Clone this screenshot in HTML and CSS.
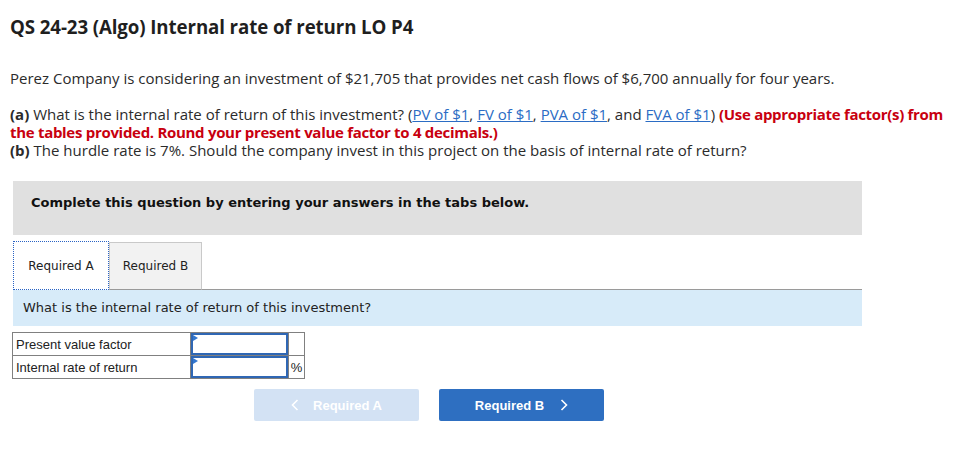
FILE: index.html
```html
<!DOCTYPE html>
<html>
<head>
<meta charset="utf-8">
<link rel="stylesheet" href="styles.css">
</head>
<body>
<h1 class="title">QS 24-23 (Algo) Internal rate of return LO P4</h1>
<p class="intro">Perez Company is considering an investment of $21,705 that provides net cash flows of $6,700 annually for four years.</p>
<p class="parts"><b>(a)</b> What is the internal rate of return of this investment? (<a href="#">PV of $1</a>, <a href="#">FV of $1</a>, <a href="#">PVA of $1</a>, and <a href="#">FVA of $1</a>) <span class="red">(Use appropriate factor(s) from the tables provided. Round your present value factor to 4 decimals.)</span><br><b>(b)</b> The hurdle rate is 7%. Should the company invest in this project on the basis of internal rate of return?</p>

<div class="question">
  <div class="banner">Complete this question by entering your answers in the tabs below.</div>
  <div class="tabs">
    <div class="tab active">Required A</div>
    <div class="tab">Required B</div>
    <div class="tab-rest"></div>
  </div>
  <div class="prompt">What is the internal rate of return of this investment?</div>
  <table class="answers">
    <tr>
      <td class="label">Present value factor</td>
      <td class="input"><div class="box"><span class="flag"></span></div></td>
      <td class="unit"></td>
    </tr>
    <tr>
      <td class="label">Internal rate of return</td>
      <td class="input"><div class="box"><span class="flag"></span></div></td>
      <td class="unit">%</td>
    </tr>
  </table>
  <div class="nav">
    <button class="btn prev"><svg class="chev left" width="8" height="12" viewBox="0 0 8 12"><path d="M6.5 1 L1.5 6 L6.5 11" fill="none" stroke="#fff" stroke-width="1.6"/></svg>Required A</button>
    <button class="btn next">Required B<svg class="chev right" width="8" height="12" viewBox="0 0 8 12"><path d="M1.5 1 L6.5 6 L1.5 11" fill="none" stroke="#fff" stroke-width="1.6"/></svg></button>
  </div>
</div>
</body>
</html>
```

FILE: styles.css
```css
html, body {
  margin: 0;
  padding: 0;
  background: #fff;
}
body {
  padding: 0 10px;
  font-family: "Open Sans", "Liberation Sans", sans-serif;
  color: #2b2b2b;
}
.title {
  margin: 0;
  padding-top: 15px;
  font-size: 18.7px;
  line-height: 24px;
  font-weight: 700;
  color: #1f1f1f;
  letter-spacing: -0.1px;
}
.intro {
  margin: 30px 0 0 0;
  font-size: 15px;
  line-height: 18px;
}
.parts {
  margin: 18px 0 0 0;
  max-width: 950px;
  font-size: 15px;
  line-height: 18px;
}
.parts b { font-weight: 700; color: #2b2b2b; }
.parts a {
  color: #2b6cc4;
  text-decoration: underline;
}
.red {
  color: #c8000f;
  font-weight: 700;
  letter-spacing: -0.3px;
}
.question {
  margin: 22px 0 0 3px;
  width: 849px;
  font-family: "DejaVu Sans", Verdana, sans-serif;
}
.banner {
  background: #e0e0e0;
  height: 54px;
  box-sizing: border-box;
  padding: 14px 18px 0 18px;
  font-size: 13px;
  font-weight: 700;
  color: #111;
  line-height: 16px;
}
.tabs {
  display: flex;
  margin-top: 6px;
  height: 49px;
}
.tab {
  box-sizing: border-box;
  width: 93px;
  height: 48px;
  margin-top: 1px;
  border: 1px solid #c9c9c9;
  background: #f2f2f2;
  font-size: 12px;
  color: #222;
  display: flex;
  align-items: center;
  justify-content: center;
  border-bottom: 1px solid #9a9a9a;
}
.tab.active {
  width: 96px;
  height: 49px;
  margin-top: 0;
  background: #fff;
  border: 1px dotted #2a63c4;
}
.tab-rest {
  flex: 1;
  border-bottom: 1px solid #9a9a9a;
}
.prompt {
  background: #d7ebf9;
  height: 36px;
  box-sizing: border-box;
  padding: 10px 10px 0 10px;
  font-size: 13px;
  color: #222;
  line-height: 16px;
}
.answers {
  margin: 6px 0 0 -1px;
  border-collapse: collapse;
  font-family: "Liberation Sans", Arial, sans-serif;
  font-size: 13px;
  color: #222;
}
.answers td {
  border: 1px solid #808080;
  height: 22px;
  padding: 0;
}
.answers .label {
  width: 174px;
  padding-left: 3px;
}
.answers .input {
  width: 97px;
  padding: 0;
}
.answers .unit {
  width: 15px;
  text-align: center;
}
.box {
  position: relative;
  box-sizing: border-box;
  height: 22px;
  border: 2px solid #2f67b4;
  background: #fff;
}
.flag {
  position: absolute;
  left: 0;
  top: 0;
  width: 0;
  height: 0;
  border-top: 3px solid transparent;
  border-bottom: 3px solid transparent;
  border-left: 5px solid #3277d0;
}
.nav {
  display: flex;
  gap: 20px;
  margin: 10px 0 0 241px;
}
.btn {
  width: 165px;
  height: 32px;
  border: none;
  border-radius: 2px;
  font-family: "Liberation Sans", Arial, sans-serif;
  font-size: 13px;
  font-weight: 700;
  color: #fff;
  display: flex;
  align-items: center;
  justify-content: center;
  padding: 0;
}
.prev { background: #d3e2f4; }
.next { background: #2e6fc1; }
.chev { display: block; }
.chev.left { margin-right: 14px; }
.chev.right { margin-left: 16px; }
```
